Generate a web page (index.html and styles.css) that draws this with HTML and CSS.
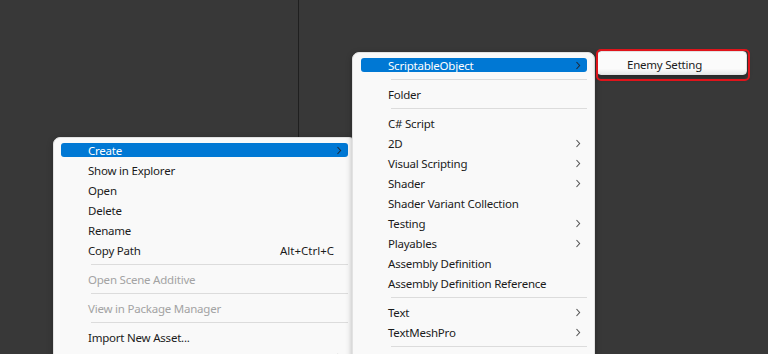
FILE: index.html
```html
<!DOCTYPE html>
<html>
<head>
<meta charset="utf-8">
<link rel="stylesheet" href="styles.css">
</head>
<body>
<div class="editor">
  <div class="pane pane-left"></div>
  <div class="pane pane-right"></div>

  <div class="menu menu-main">
    <div class="item active"><span class="label">Create</span><svg class="chev" viewBox="0 0 6 9"><path d="M1.5 1 L4.6 4.5 L1.5 8"/></svg></div>
    <div class="item"><span class="label">Show in Explorer</span></div>
    <div class="item"><span class="label">Open</span></div>
    <div class="item"><span class="label">Delete</span></div>
    <div class="item"><span class="label">Rename</span></div>
    <div class="item"><span class="label">Copy Path</span><span class="shortcut">Alt+Ctrl+C</span></div>
    <div class="sep"></div>
    <div class="item disabled"><span class="label">Open Scene Additive</span></div>
    <div class="sep"></div>
    <div class="item disabled"><span class="label">View in Package Manager</span></div>
    <div class="sep"></div>
    <div class="item"><span class="label">Import New Asset...</span></div>
    <div class="item"><span class="label">Import Package</span><svg class="chev" viewBox="0 0 6 9"><path d="M1.5 1 L4.6 4.5 L1.5 8"/></svg></div>
  </div>

  <div class="menu menu-create">
    <div class="item active"><span class="label">ScriptableObject</span><svg class="chev" viewBox="0 0 6 9"><path d="M1.5 1 L4.6 4.5 L1.5 8"/></svg></div>
    <div class="sep"></div>
    <div class="item"><span class="label">Folder</span></div>
    <div class="sep"></div>
    <div class="item"><span class="label">C# Script</span></div>
    <div class="item"><span class="label">2D</span><svg class="chev" viewBox="0 0 6 9"><path d="M1.5 1 L4.6 4.5 L1.5 8"/></svg></div>
    <div class="item"><span class="label">Visual Scripting</span><svg class="chev" viewBox="0 0 6 9"><path d="M1.5 1 L4.6 4.5 L1.5 8"/></svg></div>
    <div class="item"><span class="label">Shader</span><svg class="chev" viewBox="0 0 6 9"><path d="M1.5 1 L4.6 4.5 L1.5 8"/></svg></div>
    <div class="item"><span class="label">Shader Variant Collection</span></div>
    <div class="item"><span class="label">Testing</span><svg class="chev" viewBox="0 0 6 9"><path d="M1.5 1 L4.6 4.5 L1.5 8"/></svg></div>
    <div class="item"><span class="label">Playables</span><svg class="chev" viewBox="0 0 6 9"><path d="M1.5 1 L4.6 4.5 L1.5 8"/></svg></div>
    <div class="item"><span class="label">Assembly Definition</span></div>
    <div class="item"><span class="label">Assembly Definition Reference</span></div>
    <div class="sep"></div>
    <div class="item"><span class="label">Text</span><svg class="chev" viewBox="0 0 6 9"><path d="M1.5 1 L4.6 4.5 L1.5 8"/></svg></div>
    <div class="item"><span class="label">TextMeshPro</span><svg class="chev" viewBox="0 0 6 9"><path d="M1.5 1 L4.6 4.5 L1.5 8"/></svg></div>
    <div class="sep"></div>
  </div>

  <div class="menu menu-so">
    <div class="item"><span class="label">Enemy Setting</span></div>
  </div>
  <div class="callout"></div>
</div>
</body>
</html>
```

FILE: styles.css
```css
* { box-sizing: border-box; }
html, body {
  margin: 0;
  padding: 0;
  width: 768px;
  height: 354px;
  overflow: hidden;
  background: #383838;
  font-family: "Noto Sans", "Open Sans", "DejaVu Sans", sans-serif;
  font-size: 11.5px;
  letter-spacing: -0.22px;
}
.editor {
  position: relative;
  width: 768px;
  height: 354px;
  display: flex;
}
.pane-left {
  width: 299px;
  border-right: 1px solid #1f1f1f;
  background: #383838;
}
.pane-right {
  flex: 1;
  background: #383838;
}
.menu {
  position: absolute;
  background: #f9f9f9;
  border: 1px solid #e2e2e2;
  border-radius: 7px;
  padding: 2px 7px;
  color: #1b1b1b;
  box-shadow: 0 2px 6px rgba(0, 0, 0, 0.28);
  overflow: hidden;
}
.menu-main {
  left: 53px;
  top: 137px;
  width: 303px;
  height: 240px;
}
.menu-create {
  left: 352px;
  top: 52px;
  width: 243px;
  height: 320px;
  padding-left: 8px;
}
.menu-so {
  left: 597px;
  top: 51px;
  width: 150px;
  height: 24px;
  padding: 3px 4px;
  border-radius: 4px;
  background: linear-gradient(#fbfbfb 0%, #fbfbfb 75%, #e9e9e9 100%);
  box-shadow: 0 3px 5px rgba(0, 0, 0, 0.35);
}
.menu-so .item { padding-left: 25px; height: 18px; }
.item {
  position: relative;
  height: 20px;
  display: flex;
  align-items: center;
  padding-left: 27px;
  padding-right: 6px;
  white-space: nowrap;
}
.item .label { flex: 1; }
.item.active::before {
  content: "";
  position: absolute;
  left: 0;
  right: 0;
  top: 3px;
  bottom: 3px;
  background: #0078d4;
  border-radius: 3px;
}
.item.active .label { position: relative; color: #ffffff; }
.item.active .chev { position: relative; stroke: #1e2a3a; }
.item.disabled { color: #a3a3a3; }
.chev {
  width: 6px;
  height: 9px;
  fill: none;
  stroke: #555555;
  stroke-width: 1.1;
}
.shortcut { color: #1b1b1b; margin-right: 8px; letter-spacing: 0; }
.sep {
  height: 9px;
  display: flex;
  align-items: center;
  padding-left: 30px;
}
.sep::after {
  content: "";
  flex: 1;
  height: 1px;
  background: #dcdcdc;
}
.callout {
  position: absolute;
  left: 596px;
  top: 49px;
  width: 154px;
  height: 32px;
  border: 2px solid #e0141b;
  border-radius: 5px;
}
```
